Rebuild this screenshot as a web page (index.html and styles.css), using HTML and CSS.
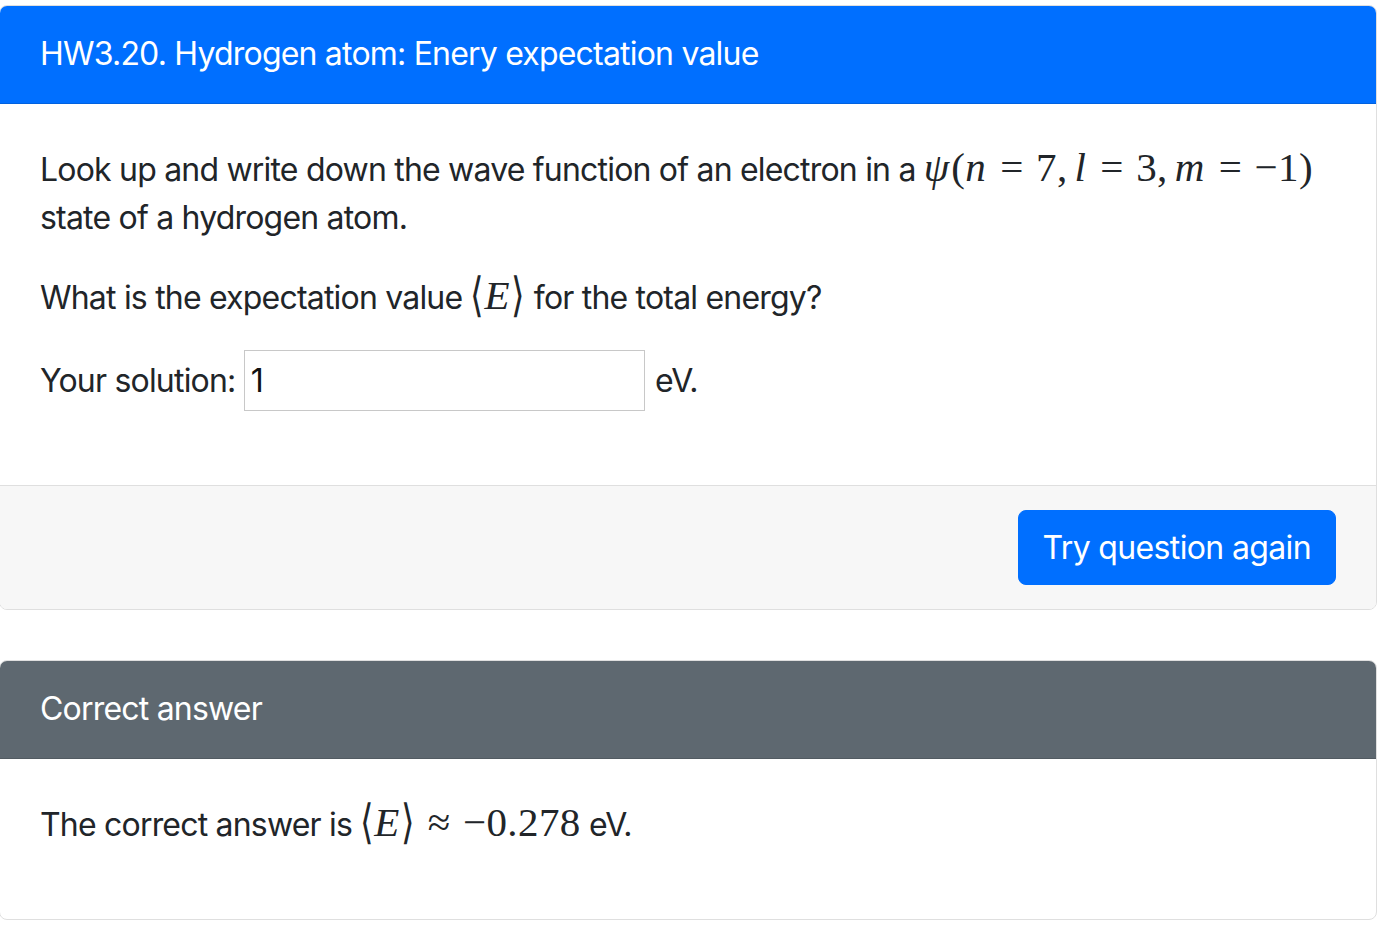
FILE: index.html
```html
<!DOCTYPE html>
<html lang="en">
<head>
<meta charset="utf-8">
<title>HW3.20. Hydrogen atom: Enery expectation value</title>
<link rel="stylesheet" href="styles.css">
</head>
<body>
<div class="page">
  <div class="card">
    <div class="card-header header-primary">HW3.20. Hydrogen atom: Enery expectation value</div>
    <div class="card-body">
      <p>Look up and write down the wave function of an electron in a <span class="math"><i>ψ</i>(<i>n</i><span class="rel">=</span>7<span class="punct">,</span><i>l</i><span class="rel">=</span>3<span class="punct">,</span><i>m</i><span class="rel">=</span>−1)</span> state of a hydrogen atom.</p>
      <p>What is the expectation value <span class="math"><span class="ang">⟨</span><i>E</i><span class="ang">⟩</span></span> for the total energy?</p>
      <p class="answer-row">Your solution: <input class="answer-input" type="text" value="1"> eV.</p>
    </div>
    <div class="card-footer">
      <button class="btn-primary" type="button">Try question again</button>
    </div>
  </div>

  <div class="card">
    <div class="card-header header-secondary">Correct answer</div>
    <div class="card-body">
      <p>The correct answer is <span class="math"><span class="ang">⟨</span><i>E</i><span class="ang">⟩</span><span class="rel">≈</span>−0.278</span> eV.</p>
    </div>
  </div>
</div>
</body>
</html>
```

FILE: styles.css
```css
html, body {
  margin: 0;
  padding: 0;
  background: #ffffff;
}

body {
  font-family: Inter, "Liberation Sans", Arial, sans-serif;
  font-size: 32px;
  line-height: 48px;
  color: #212529;
  letter-spacing: -0.025em;
}

.page {
  width: 1378px;
  margin-left: -1px;
  padding-top: 5px;
}

.card {
  border: 1px solid #dfdfdf;
  border-radius: 8px;
  background: #ffffff;
  overflow: hidden;
  margin-bottom: 50px;
}

.card-header {
  padding: 24px 40px 25px;
  border-bottom: 1px solid rgba(0, 0, 0, 0.125);
  color: #ffffff;
}

.header-primary {
  background: #006fff;
}

.header-secondary {
  background: #5e6870;
}

.card-body {
  padding: 42px 40px 38px;
}

.card-body p {
  margin: 0 0 32px 0;
}

.card-body .answer-row {
  margin: -4px 0 36px 0;
}

.math {
  font-family: "Liberation Serif", "Times New Roman", serif;
  font-size: 41px;
  line-height: 0;
  letter-spacing: 0.01em;
  white-space: nowrap;
}

.math i {
  font-style: italic;
  padding-right: 0.04em;
}

.rel {
  margin: 0 0.3em;
}

.punct {
  margin-right: 0.17em;
}

.ang {
  display: inline-block;
  font-family: "DejaVu Sans ExtraLight", "DejaVu Sans", sans-serif;
  font-weight: 200;
  transform: scale(0.85, 1.15);
  margin: 0 -0.03em;
}

.answer-input {
  width: 401px;
  height: 61px;
  box-sizing: border-box;
  border: 1px solid #c8c8c8;
  padding: 0 6px;
  font-family: inherit;
  font-size: 32px;
  letter-spacing: -0.025em;
  color: #111111;
  vertical-align: baseline;
  margin: 0 2px 0 0;
}

.card-footer {
  display: flex;
  justify-content: flex-end;
  padding: 24px 40px;
  background: #f7f7f7;
  border-top: 1px solid #dfdfdf;
}

.btn-primary {
  font-family: inherit;
  font-size: 32px;
  line-height: 48px;
  letter-spacing: -0.02em;
  color: #ffffff;
  background: #006fff;
  border: 1px solid #006fff;
  border-radius: 8px;
  padding: 13px 24px 12px;
}
```
